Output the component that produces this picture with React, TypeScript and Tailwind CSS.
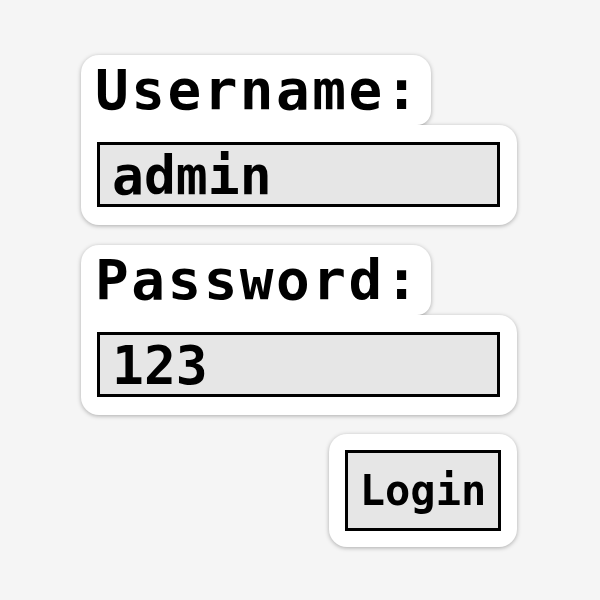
const mono = "font-['DejaVu_Sans_Mono','Liberation_Mono',monospace] font-bold text-black"

function Field({ label, value }: { label: string; value: string }) {
  return (
    <div className="flex flex-col items-start drop-shadow-[0_1px_2px_rgba(0,0,0,0.3)]">
      <div className="flex h-[70px] items-center rounded-t-[18px] rounded-br-[14px] bg-white pl-[14px] pr-[10px]">
        <span className={`${mono} text-[56px] leading-none tracking-[2.5px]`}>{label}</span>
      </div>
      <div className="w-[436px] rounded-b-[18px] rounded-tr-[18px] bg-white pb-[18px] pl-[16px] pr-[17px] pt-[17px]">
        <div className="flex h-[65px] items-center border-[3px] border-black bg-[#e6e6e6] pl-[12px] pt-[1px]">
          <span className={`${mono} text-[53px] leading-none`}>{value}</span>
        </div>
      </div>
    </div>
  )
}

export default function App() {
  return (
    <div className="flex h-[600px] w-[600px] flex-col bg-[#f5f5f5] pl-[81px] pt-[55px]">
      <Field label="Username:" value="admin" />
      <div className="mt-[20px]">
        <Field label="Password:" value="123" />
      </div>
      <div className="mt-[19px] flex w-[436px] justify-end">
        <div className="rounded-[18px] bg-white px-[16px] py-[16px] drop-shadow-[0_1px_2px_rgba(0,0,0,0.3)]">
          <div className="flex h-[81px] w-[156px] items-center justify-center border-[3px] border-black bg-[#e6e6e6]">
            <span className={`${mono} text-[42px] leading-none`}>Login</span>
          </div>
        </div>
      </div>
    </div>
  )
}
